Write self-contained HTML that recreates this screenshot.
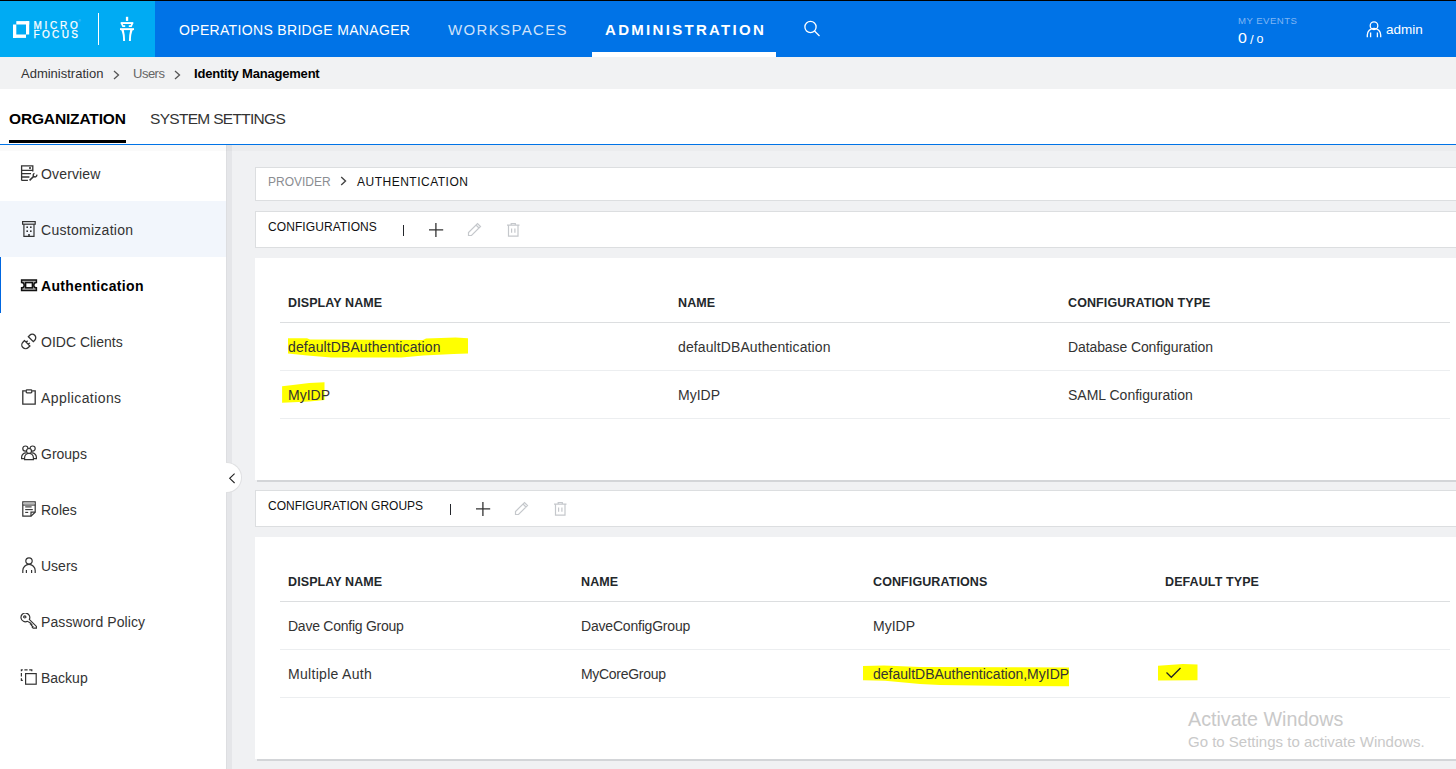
<!DOCTYPE html>
<html><head><meta charset="utf-8">
<style>
*{box-sizing:border-box;margin:0;padding:0}
html,body{width:1456px;height:769px;overflow:hidden;background:#fff;font-family:"Liberation Sans",sans-serif;color:#333}
.a{position:absolute;white-space:nowrap;line-height:1}
#hdr{position:absolute;left:0;top:0;width:1456px;height:57px;background:#0073e7}
#hdr .topline{position:absolute;left:0;top:0;width:1456px;height:1px;background:#000}
#logo{position:absolute;left:0;top:1px;width:155px;height:56px;background:#00abf3}
.nav{color:#fff;font-size:14px}
#bc{position:absolute;left:0;top:57px;width:1456px;height:32px;background:#f1f2f3}
#tabs{position:absolute;left:0;top:89px;width:1456px;height:55px;background:#fff}
#tabline{position:absolute;left:0;top:144px;width:1456px;height:1px;background:#0073e7}
#side{position:absolute;left:0;top:145px;width:226px;height:624px;background:#fff}
#stripe{position:absolute;left:226px;top:145px;width:6px;height:624px;background:#e5e6e9}
#main{position:absolute;left:232px;top:145px;width:1224px;height:624px;background:#f0f1f3}
.item{position:absolute;left:0;width:226px;height:56px}
.item .t{position:absolute;left:41px;top:22px;font-size:14px;line-height:1;color:#333}
.item svg{position:absolute;left:20px;top:20px}
.box{position:absolute;left:255px;background:#fff;border:1px solid #dcdee0;border-right:none}
.card{position:absolute;left:255px;width:1201px;background:#fff}
.cardline{position:absolute;left:257px;width:1199px;height:2px;background:#d3d5d8}
.hline{position:absolute;left:280px;width:1170px;height:1px}
.th{font-weight:bold;font-size:12.5px;color:#23272b;letter-spacing:0.1px}
.td{font-size:14px;color:#333}
</style></head><body>
<div id="hdr">
  <div class="topline"></div>
  <div id="logo">
    <svg width="155" height="56" style="position:absolute;left:0;top:0">
      <g fill="#fff">
        <rect x="16.3" y="20.1" width="12.9" height="3.4"/>
        <rect x="26" y="20.1" width="3.2" height="13.4"/>
        <rect x="13" y="23.5" width="3.3" height="13.4"/>
        <rect x="13" y="33.5" width="13" height="3.4"/>
      </g>
      <g fill="#fff" stroke="#fff" stroke-width="0.25" font-family="Liberation Sans" font-size="10">
      <text x="33.4" y="27.7" textLength="44.5" lengthAdjust="spacing">MICRO</text>
      <text x="33.4" y="37" textLength="44.5" lengthAdjust="spacing">FOCUS</text></g>
      <text x="78.5" y="21" fill="#fff" opacity="0.5" font-family="Liberation Sans" font-size="3">®</text>
      <rect x="98" y="12" width="1" height="32" fill="#fff"/>
      <g fill="#fff">
        <rect x="125.9" y="15.8" width="2.3" height="4.1"/>
        <rect x="120.7" y="21.1" width="12.6" height="1.9"/>
        <rect x="120" y="27.2" width="14" height="1.9"/>
        <path d="M121.2 29 Q123.2 33 123.1 40 H125.1 Q124.9 33 123.8 29 Z"/>
        <path d="M132.8 29 Q130.8 33 130.9 40 H128.9 Q129.1 33 130.2 29 Z"/>
      </g>
      <path d="M121.6 22.3 L122.9 25.1 H125.2 M132.4 22.3 L131.1 25.1 H128.8" fill="none" stroke="#fff" stroke-width="1.6"/>
    </svg>
  </div>
  <div class="a nav" style="left:179px;top:23px;letter-spacing:0.33px">OPERATIONS BRIDGE MANAGER</div>
  <div class="a nav" style="left:448px;top:22.3px;font-size:15px;letter-spacing:1.35px;color:#cfe1fa">WORKSPACES</div>
  <div class="a nav" style="left:605px;top:22.3px;font-size:15px;letter-spacing:2.3px;font-weight:bold">ADMINISTRATION</div>
  <div style="position:absolute;left:592px;top:52px;width:184px;height:5px;background:#fff"></div>
  <svg width="30" height="30" style="position:absolute;left:800px;top:14px">
    <circle cx="10.5" cy="13" r="5.6" fill="none" stroke="#fff" stroke-width="1.3"/>
    <line x1="14.5" y1="17" x2="19.5" y2="22" stroke="#fff" stroke-width="1.3"/>
  </svg>
  <div class="a" style="left:1238px;top:15.8px;font-size:9.6px;letter-spacing:0.45px;color:#80b6f3">MY EVENTS</div>
  <div class="a" style="left:1237.5px;top:31px;font-size:14.5px;color:#fff;transform:scaleX(1.1);transform-origin:0 0">0</div><div class="a" style="left:1250px;top:33px;font-size:13px;color:#fff">/</div><div class="a" style="left:1256.5px;top:32.5px;font-size:12.5px;color:#fff">o</div>
  <svg width="20" height="24" style="position:absolute;left:1363.5px;top:17px">
    <circle cx="10" cy="8.7" r="3.8" fill="none" stroke="#fff" stroke-width="1.3"/>
    <path d="M3.3 20.2 V18 A6.7 6.7 0 0 1 16.7 18 V20.2 M6.6 20.2 V15.6 M13.4 20.2 V15.6" fill="none" stroke="#fff" stroke-width="1.3"/>
  </svg>
  <div class="a" style="left:1386px;top:23px;font-size:13.5px;color:#fff">admin</div>
</div>

<div id="bc">
  <div class="a" style="left:21px;top:10px;font-size:13px;color:#333">Administration</div>
  <svg width="10" height="12" style="position:absolute;left:112px;top:13px"><path d="M2 1 L6.5 5 L2 9" fill="none" stroke="#555" stroke-width="1.3"/></svg>
  <div class="a" style="left:133px;top:10px;font-size:13px;color:#666;letter-spacing:-0.5px">Users</div>
  <svg width="10" height="12" style="position:absolute;left:173px;top:13px"><path d="M2 1 L6.5 5 L2 9" fill="none" stroke="#555" stroke-width="1.3"/></svg>
  <div class="a" style="left:194px;top:10px;font-size:13px;font-weight:bold;color:#000;letter-spacing:-0.2px">Identity Management</div>
</div>

<div id="tabs">
  <div class="a" style="left:9px;top:21.6px;font-size:15.5px;font-weight:bold;color:#000;letter-spacing:-0.15px">ORGANIZATION</div>
  <div style="position:absolute;left:9px;top:51px;width:117px;height:3px;background:#000"></div>
  <div class="a" style="left:150px;top:21.6px;font-size:15.5px;color:#333;letter-spacing:-0.7px">SYSTEM SETTINGS</div>
</div>
<div id="tabline"></div>

<div id="side">
  <div class="item" style="top:0">
    <svg width="20" height="20"><g fill="none" stroke="#333" stroke-width="1.3">
      <path d="M1.6 15.4 V0.9 H12.8 V6.4"/><path d="M1.6 5.3 H12.8 M1.6 8.65 H11 M1.6 12 H9.4 M1.6 15.4 H7.9"/>
      <path d="M9.6 15.4 L13.9 11.1" stroke-width="1.5"/><path d="M16.7 9.6 A1.8 1.8 0 1 1 14.5 8.4" stroke-width="1.4"/></g>
      <rect x="9.1" y="2.1" width="1.8" height="1.8" fill="#333"/></svg>
    <div class="t" style="letter-spacing:0.15px">Overview</div></div>
  <div class="item" style="top:56px;background:#f2f6fc">
    <svg width="20" height="20"><g fill="none" stroke="#333" stroke-width="1.2">
      <rect x="2.6" y="0.6" width="12.6" height="2.6"/><path d="M3.9 3.2 V15.4 H14 V3.2"/></g>
      <g fill="#333"><rect x="6.4" y="5.4" width="1.6" height="1.6"/><rect x="10" y="5.4" width="1.6" height="1.6"/><rect x="6.4" y="9.4" width="1.6" height="1.6"/><rect x="10" y="9.4" width="1.6" height="1.6"/><rect x="8.2" y="13" width="1.6" height="2.6"/></g></svg>
    <div class="t" style="letter-spacing:0.28px">Customization</div></div>
  <div class="item" style="top:112px">
    <div style="position:absolute;left:0;top:0;width:1px;height:56px;background:#0066e0"></div>
    <svg width="20" height="20" style="top:20px"><path d="M1.6 3 H16.4 V5.6 A2.6 2.6 0 0 0 16.4 10.8 V13.4 H1.6 V10.8 A2.6 2.6 0 0 0 1.6 5.6 Z" fill="#b0b0b0" stroke="#111" stroke-width="1.5"/>
      <rect x="5.6" y="5.6" width="6.8" height="5.2" fill="#fff" stroke="#111" stroke-width="1.5"/></svg>
    <div class="t" style="font-weight:bold;color:#000;letter-spacing:0.35px">Authentication</div></div>
  <div class="item" style="top:168px">
    <svg width="20" height="20"><g fill="none" stroke="#333" stroke-width="1.3" transform="rotate(-45 9 8.5)">
      <path d="M11.6 5 H13.6 A3.5 3.5 0 0 1 13.6 12 H11.6 Z" transform="translate(0.35 -0.35)"/>
      <path d="M6.5 4.7 H4.2 A3.8 3.8 0 0 0 4.2 12.3 H6.5 Z M6.5 7 H8.6 M6.5 10 H8.6"/></g></svg>
    <div class="t">OIDC Clients</div></div>
  <div class="item" style="top:224px">
    <svg width="20" height="20"><g fill="none" stroke="#333" stroke-width="1.3">
      <path d="M5.8 1.8 H2.8 V15.2 H15.2 V1.8 H12.2"/><rect x="6.2" y="0.8" width="5.6" height="3" rx="0.8"/></g></svg>
    <div class="t" style="letter-spacing:0.42px">Applications</div></div>
  <div class="item" style="top:280px">
    <svg width="20" height="20"><g fill="none" stroke="#333" stroke-width="1.2">
      <circle cx="5.4" cy="3.6" r="2.6"/><circle cx="12.6" cy="3.6" r="2.6"/>
      <path d="M6.2 13.6 H1.6 V12 A4.2 4.2 0 0 1 6.4 8"/><path d="M11.8 13.6 H16.4 V12 A4.2 4.2 0 0 0 11.6 8"/>
      <circle cx="9" cy="6" r="2.5" fill="#fff"/><path d="M4.6 14.6 V12.8 A4.4 4.4 0 0 1 13.4 12.8 V14.6 Z" fill="#fff"/></g></svg>
    <div class="t">Groups</div></div>
  <div class="item" style="top:336px">
    <svg width="20" height="20"><g fill="none" stroke="#333" stroke-width="1.2">
      <path d="M2.8 0.8 H15.2 V11.2 L11 15.2 H2.8 Z"/><path d="M2.8 4 H15.2"/><path d="M15.2 11.2 H11 V15.2"/></g>
      <rect x="3.4" y="1.4" width="11.2" height="2" fill="#bbb"/>
      <g stroke="#333" stroke-width="1.1"><path d="M5.2 5.9 H11.6"/><path d="M5.2 8.6 H12.8"/><path d="M5.2 11.4 H8.2"/></g></svg>
    <div class="t">Roles</div></div>
  <div class="item" style="top:392px">
    <svg width="20" height="20"><g fill="none" stroke="#333" stroke-width="1.2">
      <circle cx="9" cy="4" r="3.2"/><path d="M2.8 16 V13.6 A6.2 6.2 0 0 1 15.2 13.6 V16 M6.4 16 V13 M11.6 16 V13"/></g></svg>
    <div class="t">Users</div></div>
  <div class="item" style="top:448px">
    <svg width="20" height="20"><g fill="none" stroke="#333" stroke-width="1.2">
      <path d="M9.3 6.4 L16.4 13.4 V15.2 H13.2 L12.3 14.3 L12.9 13.6 L11.5 12.7 L12 12 L10.5 11.1 L11 10.4 L9.6 9.4 L7.4 8.3 A4.4 4.4 0 1 1 9.3 6.4 Z"/>
      <circle cx="4.8" cy="3.9" r="1.1"/></g></svg>
    <div class="t" style="letter-spacing:0.1px">Password Policy</div></div>
  <div class="item" style="top:504px">
    <svg width="20" height="20"><g fill="none" stroke="#333" stroke-width="1.2">
      <rect x="5.6" y="4.6" width="10.6" height="10.6"/>
      <path d="M1.4 2.2 V0.8 H2.8 M4.4 0.8 H7.6 M9.2 0.8 H11.8 V2.2 M1.4 4 V7.4 M1.4 9.2 V11.4 H2.8"/></g></svg>
    <div class="t">Backup</div></div>
</div>

<div id="stripe"></div><div style="position:absolute;left:226px;top:145px;width:1px;height:624px;background:#dddee1"></div>
<div id="main"></div><div style="position:absolute;left:0;top:145px;width:1456px;height:6px;background:rgba(0,0,0,0.018)"></div>
<!-- provider breadcrumb box -->
<div class="box" style="top:167px;width:1201px;height:34px"></div>
<div class="a" style="left:268px;top:176px;font-size:12px;color:#8a8d91">PROVIDER</div>
<svg width="10" height="12" style="position:absolute;left:339px;top:176px"><path d="M2.2 1 L6.5 5 L2.2 9" fill="none" stroke="#444" stroke-width="1.4"/></svg>
<div class="a" style="left:357px;top:176px;font-size:12px;color:#111;letter-spacing:0.5px">AUTHENTICATION</div>
<!-- configurations toolbar -->
<div class="box" style="top:211px;width:1201px;height:37px"></div>
<div class="a" style="left:268px;top:221px;font-size:12px;color:#111;letter-spacing:0.08px">CONFIGURATIONS</div>
<div style="position:absolute;left:402.5px;top:225px;width:1.7px;height:11px;background:#23262b"></div>
<svg width="16" height="16" style="position:absolute;left:429px;top:222px"><path d="M6.9 1 V15 M0 7.8 H14.2" stroke="#333" stroke-width="1.3" fill="none"/></svg>
<svg width="16" height="16" style="position:absolute;left:467px;top:222px"><path d="M1.5 13.5 V10.5 L10.5 1.5 L13.5 4.5 L4.5 13.5 Z M9 3 L12 6" stroke="#c5c8cc" stroke-width="1.2" fill="none"/></svg>
<svg width="16" height="16" style="position:absolute;left:506px;top:222px"><path d="M1 3.2 H13.5 M5.2 3.2 V1.5 H9.3 V3.2 M2.5 3.2 V14.2 H12 V3.2 M5.6 6.6 V10.8 M8.9 6.6 V10.8" stroke="#c5c8cc" stroke-width="1.2" fill="none"/></svg>

<!-- table 1 card -->
<div class="card" style="top:258px;height:222px"></div>
<div class="cardline" style="top:480px"></div>
<div class="a th" style="left:288px;top:296.5px">DISPLAY NAME</div>
<div class="a th" style="left:678px;top:296.5px">NAME</div>
<div class="a th" style="left:1068px;top:296.5px">CONFIGURATION TYPE</div>
<div class="hline" style="top:322px;background:#dcdee0"></div>
<svg width="190" height="30" style="position:absolute;left:280px;top:334px"><path d="M8 4.2 L27 4.2 L30 5.6 L143 6 L146 4.6 L175.5 3.4 L188 4.2 L188 19.4 L173.6 20 L143.4 21.4 L121.4 23.5 L51.3 23.5 L27.3 21.4 L8 19.6 Z" fill="#ffff00"/></svg>
<div class="a td" style="left:288px;top:340.3px;letter-spacing:0.1px">defaultDBAuthentication</div>
<div class="a td" style="left:678px;top:340.3px;letter-spacing:0.1px">defaultDBAuthentication</div>
<div class="a td" style="left:1068px;top:340.3px;letter-spacing:-0.1px">Database Configuration</div>
<div class="hline" style="top:370px;background:#eceef0"></div>
<svg width="60" height="30" style="position:absolute;left:278px;top:378px"><path d="M4.1 8.3 L14.9 7 L31.3 4.9 L46.5 4.2 L46.5 22 L31.3 23.4 L4.1 24.8 Z" fill="#ffff00"/></svg>
<div class="a td" style="left:288px;top:388.3px">MyIDP</div>
<div class="a td" style="left:678px;top:388.3px">MyIDP</div>
<div class="a td" style="left:1068px;top:388.3px">SAML Configuration</div>
<div class="hline" style="top:418px;background:#eceef0"></div>
<!-- configuration groups toolbar -->
<div class="box" style="top:490px;width:1201px;height:37px"></div>
<div class="a" style="left:268px;top:500px;font-size:12px;color:#111">CONFIGURATION GROUPS</div>
<div style="position:absolute;left:449.5px;top:504px;width:1.7px;height:11px;background:#23262b"></div>
<svg width="16" height="16" style="position:absolute;left:476px;top:501px"><path d="M6.9 1 V15 M0 7.8 H14.2" stroke="#333" stroke-width="1.3" fill="none"/></svg>
<svg width="16" height="16" style="position:absolute;left:514px;top:501px"><path d="M1.5 13.5 V10.5 L10.5 1.5 L13.5 4.5 L4.5 13.5 Z M9 3 L12 6" stroke="#c5c8cc" stroke-width="1.2" fill="none"/></svg>
<svg width="16" height="16" style="position:absolute;left:553px;top:501px"><path d="M1 3.2 H13.5 M5.2 3.2 V1.5 H9.3 V3.2 M2.5 3.2 V14.2 H12 V3.2 M5.6 6.6 V10.8 M8.9 6.6 V10.8" stroke="#c5c8cc" stroke-width="1.2" fill="none"/></svg>

<!-- table 2 card -->
<div class="card" style="top:537px;height:222px"></div>
<div class="cardline" style="top:759px"></div>
<div class="a th" style="left:288px;top:575.5px">DISPLAY NAME</div>
<div class="a th" style="left:581px;top:575.5px">NAME</div>
<div class="a th" style="left:873px;top:575.5px">CONFIGURATIONS</div>
<div class="a th" style="left:1165px;top:575.5px">DEFAULT TYPE</div>
<div class="hline" style="top:601px;background:#dcdee0"></div>
<div class="a td" style="left:288px;top:619.3px;letter-spacing:-0.25px">Dave Config Group</div>
<div class="a td" style="left:581px;top:619.3px;letter-spacing:-0.2px">DaveConfigGroup</div>
<div class="a td" style="left:873px;top:619.3px">MyIDP</div>
<div class="hline" style="top:649px;background:#eceef0"></div>
<svg width="215" height="34" style="position:absolute;left:860px;top:656px"><path d="M3 10 L24 9.5 L60 11 L209 11.5 L209 30.2 L150 30 L80 29 L60 28 L25 24.8 L3 24.2 Z" fill="#ffff00"/></svg>
<svg width="50" height="24" style="position:absolute;left:1155px;top:660px"><path d="M3 5.8 L28 4.1 L42.5 4.5 L42.5 20.2 L3 20.5 Z" fill="#ffff00"/><path d="M11.5 12.5 L16.3 17.3 L25.5 8" fill="none" stroke="#222" stroke-width="1.3"/></svg>
<div class="a td" style="left:288px;top:667.3px;letter-spacing:0.3px">Multiple Auth</div>
<div class="a td" style="left:581px;top:667.3px;letter-spacing:-0.3px">MyCoreGroup</div>
<div class="a td" style="left:873px;top:667.3px">defaultDBAuthentication,MyIDP</div>
<div class="hline" style="top:697px;background:#eceef0"></div>
<!-- activate windows watermark -->
<div class="a" style="left:1188px;top:710px;font-size:19.7px;color:#c9c9c9">Activate Windows</div>
<div class="a" style="left:1188px;top:734px;font-size:15px;color:#c9c9c9">Go to Settings to activate Windows.</div>
<div style="position:absolute;left:226px;top:462px;width:16px;height:31px;border-radius:0 15.5px 15.5px 0;background:#fff;border:1px solid #dfe0e2;border-left:none"></div>
<svg width="12" height="14" style="position:absolute;left:226px;top:471px"><path d="M8.6 2.6 L3.7 7.3 L8.6 12" fill="none" stroke="#222" stroke-width="1.1"/></svg>
</body></html>
